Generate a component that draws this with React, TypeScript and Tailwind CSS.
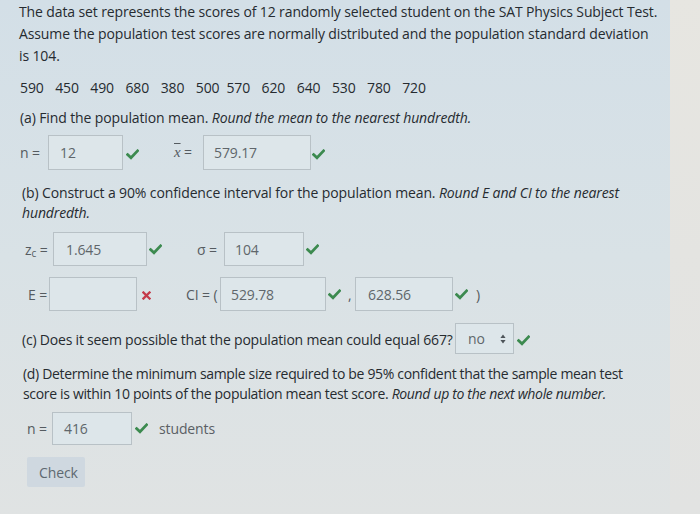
import React from "react";

const Tick = ({ className = "" }: { className?: string }) => (
  <svg width="13" height="11" viewBox="0 0 13 11" className={"shrink-0 " + className}>
    <path d="M1.6 5.6 L5 8.8 L11.6 1.8" fill="none" stroke="#3c8a4f" strokeWidth="2.7" strokeLinecap="square" />
  </svg>
);

const Cross = ({ className = "" }: { className?: string }) => (
  <svg width="9" height="9" viewBox="0 0 9 9" className={"shrink-0 " + className}>
    <path d="M1.5 1.5 L7.5 7.5 M7.5 1.5 L1.5 7.5" fill="none" stroke="#c43b4a" strokeWidth="2.3" strokeLinecap="square" />
  </svg>
);

const Box = ({ className, value = "" }: { className: string; value?: string }) => (
  <div className={"flex items-center border border-[#b8c1c6] bg-[#dde6ea] text-[#60666b] " + className}>{value}</div>
);

export default function App() {
  const nums = ["590", "450", "490", "680", "380", "500", "570", "620", "640", "530", "780", "720"];
  return (
    <div className="flex h-[514px] w-[700px] overflow-hidden bg-linear-to-b from-[#d3dfe7] via-[#d9e2e6] to-[#e0e3e3] font-['Open_Sans',sans-serif] text-[14px] tracking-[-0.12px] text-[#262b30]">
      <main className="flex min-w-0 flex-1 flex-col">
        <p className="whitespace-nowrap pl-[19px] pt-[1px] leading-[22px]">
          The data set represents the scores of 12 randomly selected student on the SAT Physics Subject Test.
          <br />
          Assume the population test scores are normally distributed and the population standard deviation
          <br />
          is 104.
        </p>

        <div className="mt-[10px] flex pl-[20px] leading-[22px]">
          {nums.map((n, i) => (
            <span key={i} className={i === 0 ? "" : i === 6 ? "ml-[7px]" : "ml-[11.5px]"}>
              {n}
            </span>
          ))}
        </div>

        <p className="mt-[8px] whitespace-nowrap pl-[20px] leading-[22px]">
          (a) Find the population mean. <i>Round the mean to the nearest hundredth.</i>
        </p>

        <div className="mt-[6px] flex h-[35px] items-center pl-[20px]">
          <span className="w-[28px] text-[#555b60]">n =</span>
          <Box className="h-[35px] w-[75px] pl-[11px]" value="12" />
          <Tick className="ml-[3px] mt-[3px]" />
          <span className="ml-[35px] w-[29px] text-[#555b60]">
            <span className="font-['Liberation_Serif',serif] text-[15px] italic overline">x</span> =
          </span>
          <Box className="h-[35px] w-[108px] pl-[10px]" value="579.17" />
          <Tick className="ml-[1px] mt-[3px]" />
        </div>

        <p className="mt-[13px] whitespace-nowrap pl-[22px] leading-[20px]">
          (b) Construct a 90% confidence interval for the population mean. <i>Round E and CI to the nearest</i>
          <br />
          <i>hundredth.</i>
        </p>

        <div className="mt-[9px] flex h-[34px] items-center pl-[25px]">
          <span className="w-[28px] text-[#555b60]">
            z<sub className="text-[10px]">c</sub> =
          </span>
          <Box className="h-[34px] w-[94px] pl-[12px]" value="1.645" />
          <Tick className="ml-[2px]" />
          <span className="ml-[35px] w-[27px] text-[#555b60]">σ =</span>
          <Box className="h-[34px] w-[80px] pl-[10px]" value="104" />
          <Tick className="ml-[2px]" />
        </div>

        <div className="mt-[11px] flex h-[34px] items-center pl-[28px]">
          <span className="w-[21px] text-[#555b60]">E =</span>
          <Box className="h-[34px] w-[88px]" />
          <Cross className="ml-[5px] mt-[3px]" />
          <span className="ml-[35px] w-[34px] whitespace-nowrap text-[#555b60]">CI = (</span>
          <Box className="h-[34px] w-[106px] pl-[10px]" value="529.78" />
          <Tick className="ml-[2px]" />
          <span className="ml-[7px] w-[4px] text-[#555b60]">,</span>
          <Box className="ml-[3px] h-[34px] w-[98px] pl-[12px]" value="628.56" />
          <Tick className="ml-[2px]" />
          <span className="ml-[8px] text-[#555b60]">)</span>
        </div>

        <div className="mt-[12px] flex items-start pl-[22px]">
          <span className="w-[433px] whitespace-nowrap pt-[6px] leading-[22px] tracking-[-0.2px]">
            (c) Does it seem possible that the population mean could equal 667?
          </span>
          <div className="flex h-[31px] w-[59px] items-center border border-[#b8c1c6] bg-[#dde6ea] pl-[12px] text-[#60666b]">
            <span>no</span>
            <svg width="6" height="10" viewBox="0 0 6 10" className="ml-[15px]">
              <path d="M3 0.5 L5.6 4 L0.4 4 Z M3 9.5 L5.6 6 L0.4 6 Z" fill="#4d5459" />
            </svg>
          </div>
          <Tick className="ml-[3px] mt-[12px]" />
        </div>

        <p className="mt-[10px] whitespace-nowrap pl-[23px] leading-[20px] tracking-[-0.33px]">
          (d) Determine the minimum sample size required to be 95% confident that the sample mean test
          <br />
          score is within 10 points of the population mean test score. <i>Round up to the next whole number.</i>
        </p>

        <div className="mt-[8px] flex h-[33px] items-center pl-[27px]">
          <span className="w-[25px] text-[#555b60]">n =</span>
          <Box className="h-[33px] w-[80px] pl-[11px]" value="416" />
          <Tick className="ml-[3px]" />
          <span className="ml-[11px] text-[#5a6065]">students</span>
        </div>

        <div className="ml-[27px] mt-[12px] flex h-[30px] w-[58px] items-center rounded-[2px] bg-[#cfd8e0] pl-[12px] text-[#5e6870]">
          Check
        </div>
      </main>
      <div className="w-[30px] shrink-0 bg-linear-to-b from-[#e7e6e1] via-[#e4e4e1] to-[#e2e3e2]" />
    </div>
  );
}
